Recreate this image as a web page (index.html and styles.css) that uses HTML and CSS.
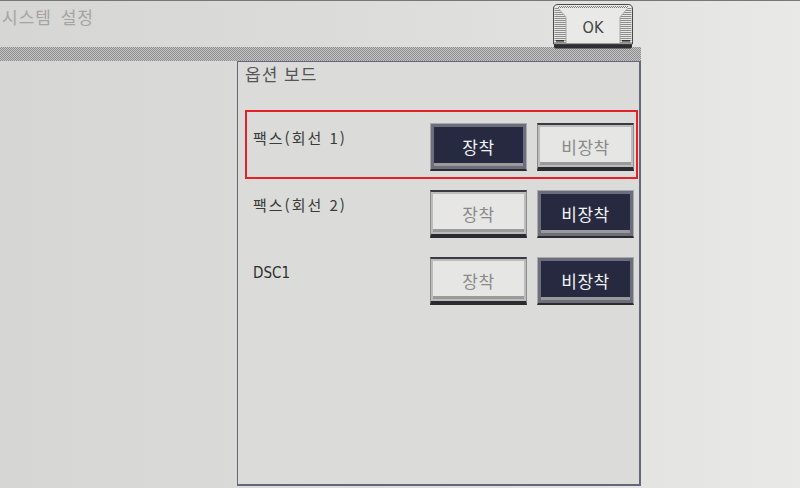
FILE: index.html
```html
<!DOCTYPE html>
<html lang="ko">
<head>
<meta charset="utf-8">
<title>시스템 설정</title>
<link rel="stylesheet" href="styles.css">
</head>
<body>
<div class="screen">
  <header class="top">
    <div class="title">시스템 설정</div>
    <button class="ok" type="button">
      <svg class="ok-face" viewBox="0 0 80 45" width="80" height="45" aria-hidden="true">
        <defs>
          <pattern id="hs" width="2" height="2" patternUnits="userSpaceOnUse">
            <rect width="2" height="1" fill="#8c8c8c"/>
          </pattern>
          <pattern id="dots" width="2" height="2" patternUnits="userSpaceOnUse">
            <rect width="1" height="1" fill="#7a7a7a"/>
            <rect x="1" y="1" width="1" height="1" fill="#7a7a7a"/>
          </pattern>
        </defs>
        <rect x="1" y="38" width="78" height="6.5" rx="2" fill="#2e2e34"/>
        <path d="M0.5 40 V5 Q0.5 0.5 5 0.5 H75 Q79.5 0.5 79.5 5 V40 Z" fill="#e9e9e7" stroke="#4a4a4a"/>
        <polygon points="1.5,4 5,4 13,13 13,39 1.5,39" fill="url(#hs)"/>
        <polygon points="78.5,4 75,4 67,13 67,39 78.5,39" fill="url(#hs)"/>
        <rect x="5" y="2" width="70" height="2" fill="url(#dots)"/>
        <path d="M5 4 L13 13 V39 M75 4 L67 13 V39" stroke="#a8a8a8" fill="none"/>
        <rect x="3" y="36" width="8" height="1.6" fill="#333"/>
        <rect x="69" y="36" width="8" height="1.6" fill="#333"/>
      </svg>
      <span class="ok-text">OK</span>
    </button>
  </header>
  <div class="bar"></div>
  <div class="main">
    <div class="side"></div>
    <section class="panel">
      <div class="panel-title">옵션 보드</div>
      <div class="row selected">
        <div class="label">팩스(회선 1)</div>
        <div class="btns">
          <div class="btn on">장착</div>
          <div class="btn off">비장착</div>
        </div>
      </div>
      <div class="row">
        <div class="label">팩스(회선 2)</div>
        <div class="btns">
          <div class="btn off">장착</div>
          <div class="btn on">비장착</div>
        </div>
      </div>
      <div class="row">
        <div class="label latin">DSC1</div>
        <div class="btns">
          <div class="btn off">장착</div>
          <div class="btn on">비장착</div>
        </div>
      </div>
    </section>
  </div>
</div>
</body>
</html>
```

FILE: styles.css
```css
html, body {
  margin: 0;
  padding: 0;
}

body {
  font-family: "Noto Sans CJK KR", "Noto Sans", sans-serif;
}

.screen {
  width: 800px;
  height: 488px;
  overflow: hidden;
  background: linear-gradient(90deg, #d6d6d4 0%, #dcdcda 45%, #e2e2e0 75%, #e9e9e7 100%);
}

.top {
  box-sizing: border-box;
  height: 47px;
  border-top: 1px solid #77777a;
  display: flex;
  align-items: flex-start;
}

.title {
  padding: 6px 0 0 2px;
  font-size: 17px;
  line-height: 20px;
  letter-spacing: 1px;
  word-spacing: 3px;
  color: #a4a4a4;
}

.ok {
  position: relative;
  z-index: 2;
  margin: 3px 167px 0 auto;
  width: 80px;
  height: 45px;
  padding: 0;
  border: 0;
  background: none;
  display: flex;
  align-items: center;
  justify-content: center;
}

.ok-face {
  position: absolute;
  left: 0;
  top: 0;
  display: block;
}

.ok-text {
  position: relative;
  padding-top: 2px;
  font-family: "Liberation Sans Narrow", "DejaVu Sans Condensed", "Liberation Sans", sans-serif;
  font-stretch: condensed;
  font-size: 16px;
  color: #454545;
}

.bar {
  width: 641px;
  height: 14px;
  background: repeating-conic-gradient(#8e8e8e 0 25%, #c4c4c4 0 50%) 0 0 / 2px 2px;
}

.main {
  display: flex;
  height: 427px;
}

.side {
  flex: none;
  width: 237px;
}

.panel {
  flex: none;
  box-sizing: border-box;
  width: 404px;
  height: 425px;
  border: 1px solid #62677a;
  border-right-width: 2px;
  border-bottom-width: 2px;
  background: #dbdbd9;
}

.panel-title {
  box-sizing: border-box;
  height: 49px;
  padding: 2px 0 0 7px;
  font-size: 17px;
  line-height: 20px;
  letter-spacing: 1px;
  color: #555;
}

.row {
  box-sizing: border-box;
  height: 67px;
  margin: 0 2px 0 8px;
  padding: 12px 3px 0 7px;
  display: flex;
  align-items: flex-start;
}

.row.selected {
  outline: 2px solid #e3212b;
  outline-offset: -1px;
}

.label {
  flex: 1;
  padding-top: 6px;
  font-size: 15px;
  line-height: 18px;
  letter-spacing: 2px;
  color: #3a3a3a;
}

.label.latin {
  padding-top: 7px;
  font-family: "Liberation Sans Narrow", "DejaVu Sans Condensed", "Liberation Sans", sans-serif;
  font-stretch: condensed;
  letter-spacing: 0;
  font-size: 15px;
  color: #2e2e2e;
}

.btns {
  display: flex;
  gap: 10px;
}

.btn {
  box-sizing: border-box;
  width: 97px;
  height: 48px;
  display: flex;
  align-items: center;
  justify-content: center;
  font-size: 17px;
  letter-spacing: 0.5px;
}

.btn.on {
  background: #262940;
  color: #f2f2f4;
  border: 1px solid #a9a9ad;
  border-bottom: 2px solid #2a2a30;
  box-shadow: inset 0 0 0 3px #6c6e7c, inset 0 -6px 0 #9a9a9c;
}

.btn.off {
  background: #e6e6e4;
  color: #8a8a8a;
  border-top: 2px solid #3a3a42;
  border-left: 1px solid #8c8c8c;
  border-right: 1px solid #8c8c8c;
  border-bottom: 4px solid #2a2a30;
  box-shadow: inset 0 0 0 2px #bcbcbc, inset 0 -5px 0 #9a9a9a;
}
```
